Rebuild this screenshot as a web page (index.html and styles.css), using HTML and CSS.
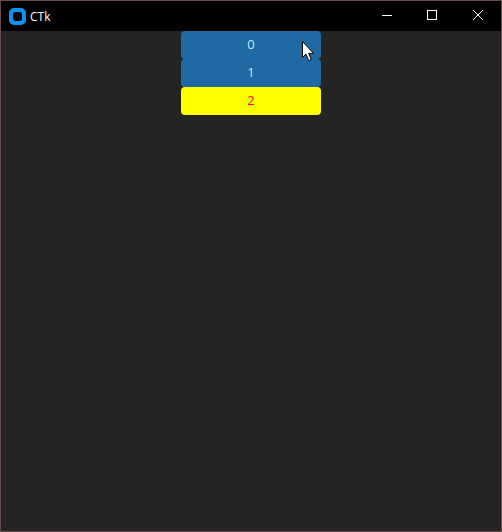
FILE: index.html
```html
<!DOCTYPE html>
<html lang="en">
<head>
<meta charset="utf-8">
<title>CTk</title>
<link rel="stylesheet" href="styles.css">
</head>
<body>
<div class="window">
  <header class="titlebar">
    <svg class="app-icon" width="17" height="17" viewBox="0 0 17 17"><path fill-rule="evenodd" fill="#0a95f5" d="M5 0h7a5 5 0 0 1 5 5v7a5 5 0 0 1-5 5H5a5 5 0 0 1-5-5V5a5 5 0 0 1 5-5zM6 4A2 2 0 0 0 4 6v5a2 2 0 0 0 2 2h5a2 2 0 0 0 2-2V6a2 2 0 0 0-2-2z"/></svg>
    <span class="title">CTk</span>
    <div class="controls">
      <button class="ctl"><svg width="12" height="12" viewBox="0 0 12 12"><path d="M2 6.500h10" stroke="#fff" fill="none"/></svg></button>
      <button class="ctl"><svg width="12" height="12" viewBox="0 0 12 12"><rect x="1.500" y="1.500" width="9" height="9" stroke="#fff" fill="none"/></svg></button>
      <button class="ctl"><svg width="12" height="12" viewBox="0 0 12 12"><path d="M1 1l10 10M11 1L1 11" stroke="#fff" fill="none"/></svg></button>
    </div>
  </header>
  <main class="content">
    <div class="stack">
      <div class="tab tab-blue">0</div>
      <div class="tab tab-blue">1</div>
      <div class="tab tab-yellow">2</div>
      <svg class="cursor" width="13" height="21" viewBox="0 0 13 21"><path d="M0.500 0.500V16.500L4 13.200L6.700 19.700L9.300 18.600L6.600 12.300H11.500Z" fill="#fff" stroke="#000"/></svg>
    </div>
  </main>
</div>
</body>
</html>
```
FILE: styles.css
```css
html, body {
  margin: 0;
  padding: 0;
  background: #242424;
}
.window {
  box-sizing: border-box;
  width: 502px;
  height: 532px;
  border: 1px solid #6a4a4a;
  display: flex;
  flex-direction: column;
  background: #242424;
  font-family: "Open Sans", "Liberation Sans", sans-serif;
}
.titlebar {
  height: 30px;
  flex: none;
  background: #000;
  display: flex;
  align-items: center;
  color: #fff;
}
.app-icon {
  margin-left: 8px;
  flex: none;
}
.title {
  margin-left: 4px;
  font-size: 12px;
  font-family: "Open Sans", "Liberation Sans", sans-serif;
}
.controls {
  margin-left: auto;
  display: flex;
  height: 100%;
}
.ctl {
  box-sizing: border-box;
  width: 46px;
  height: 30px;
  padding: 0 0 2px;
  border: 0;
  background: transparent;
  display: flex;
  align-items: center;
  justify-content: center;
}
.content {
  flex: 1;
  display: flex;
  justify-content: center;
}
.stack {
  position: relative;
  width: 140px;
  height: max-content;
}
.tab {
  box-sizing: border-box;
  height: 28px;
  padding-bottom: 2px;
  border-radius: 4px;
  display: flex;
  align-items: center;
  justify-content: center;
  font-family: "Open Sans", "Liberation Sans", sans-serif;
  font-size: 13px;
}
.tab-blue {
  background: #1f6aa5;
  color: #cfe3f2;
}
.tab-yellow {
  background: #ffff00;
  color: #ff0000;
}
.cursor {
  position: absolute;
  left: 121px;
  top: 10px;
}
```
